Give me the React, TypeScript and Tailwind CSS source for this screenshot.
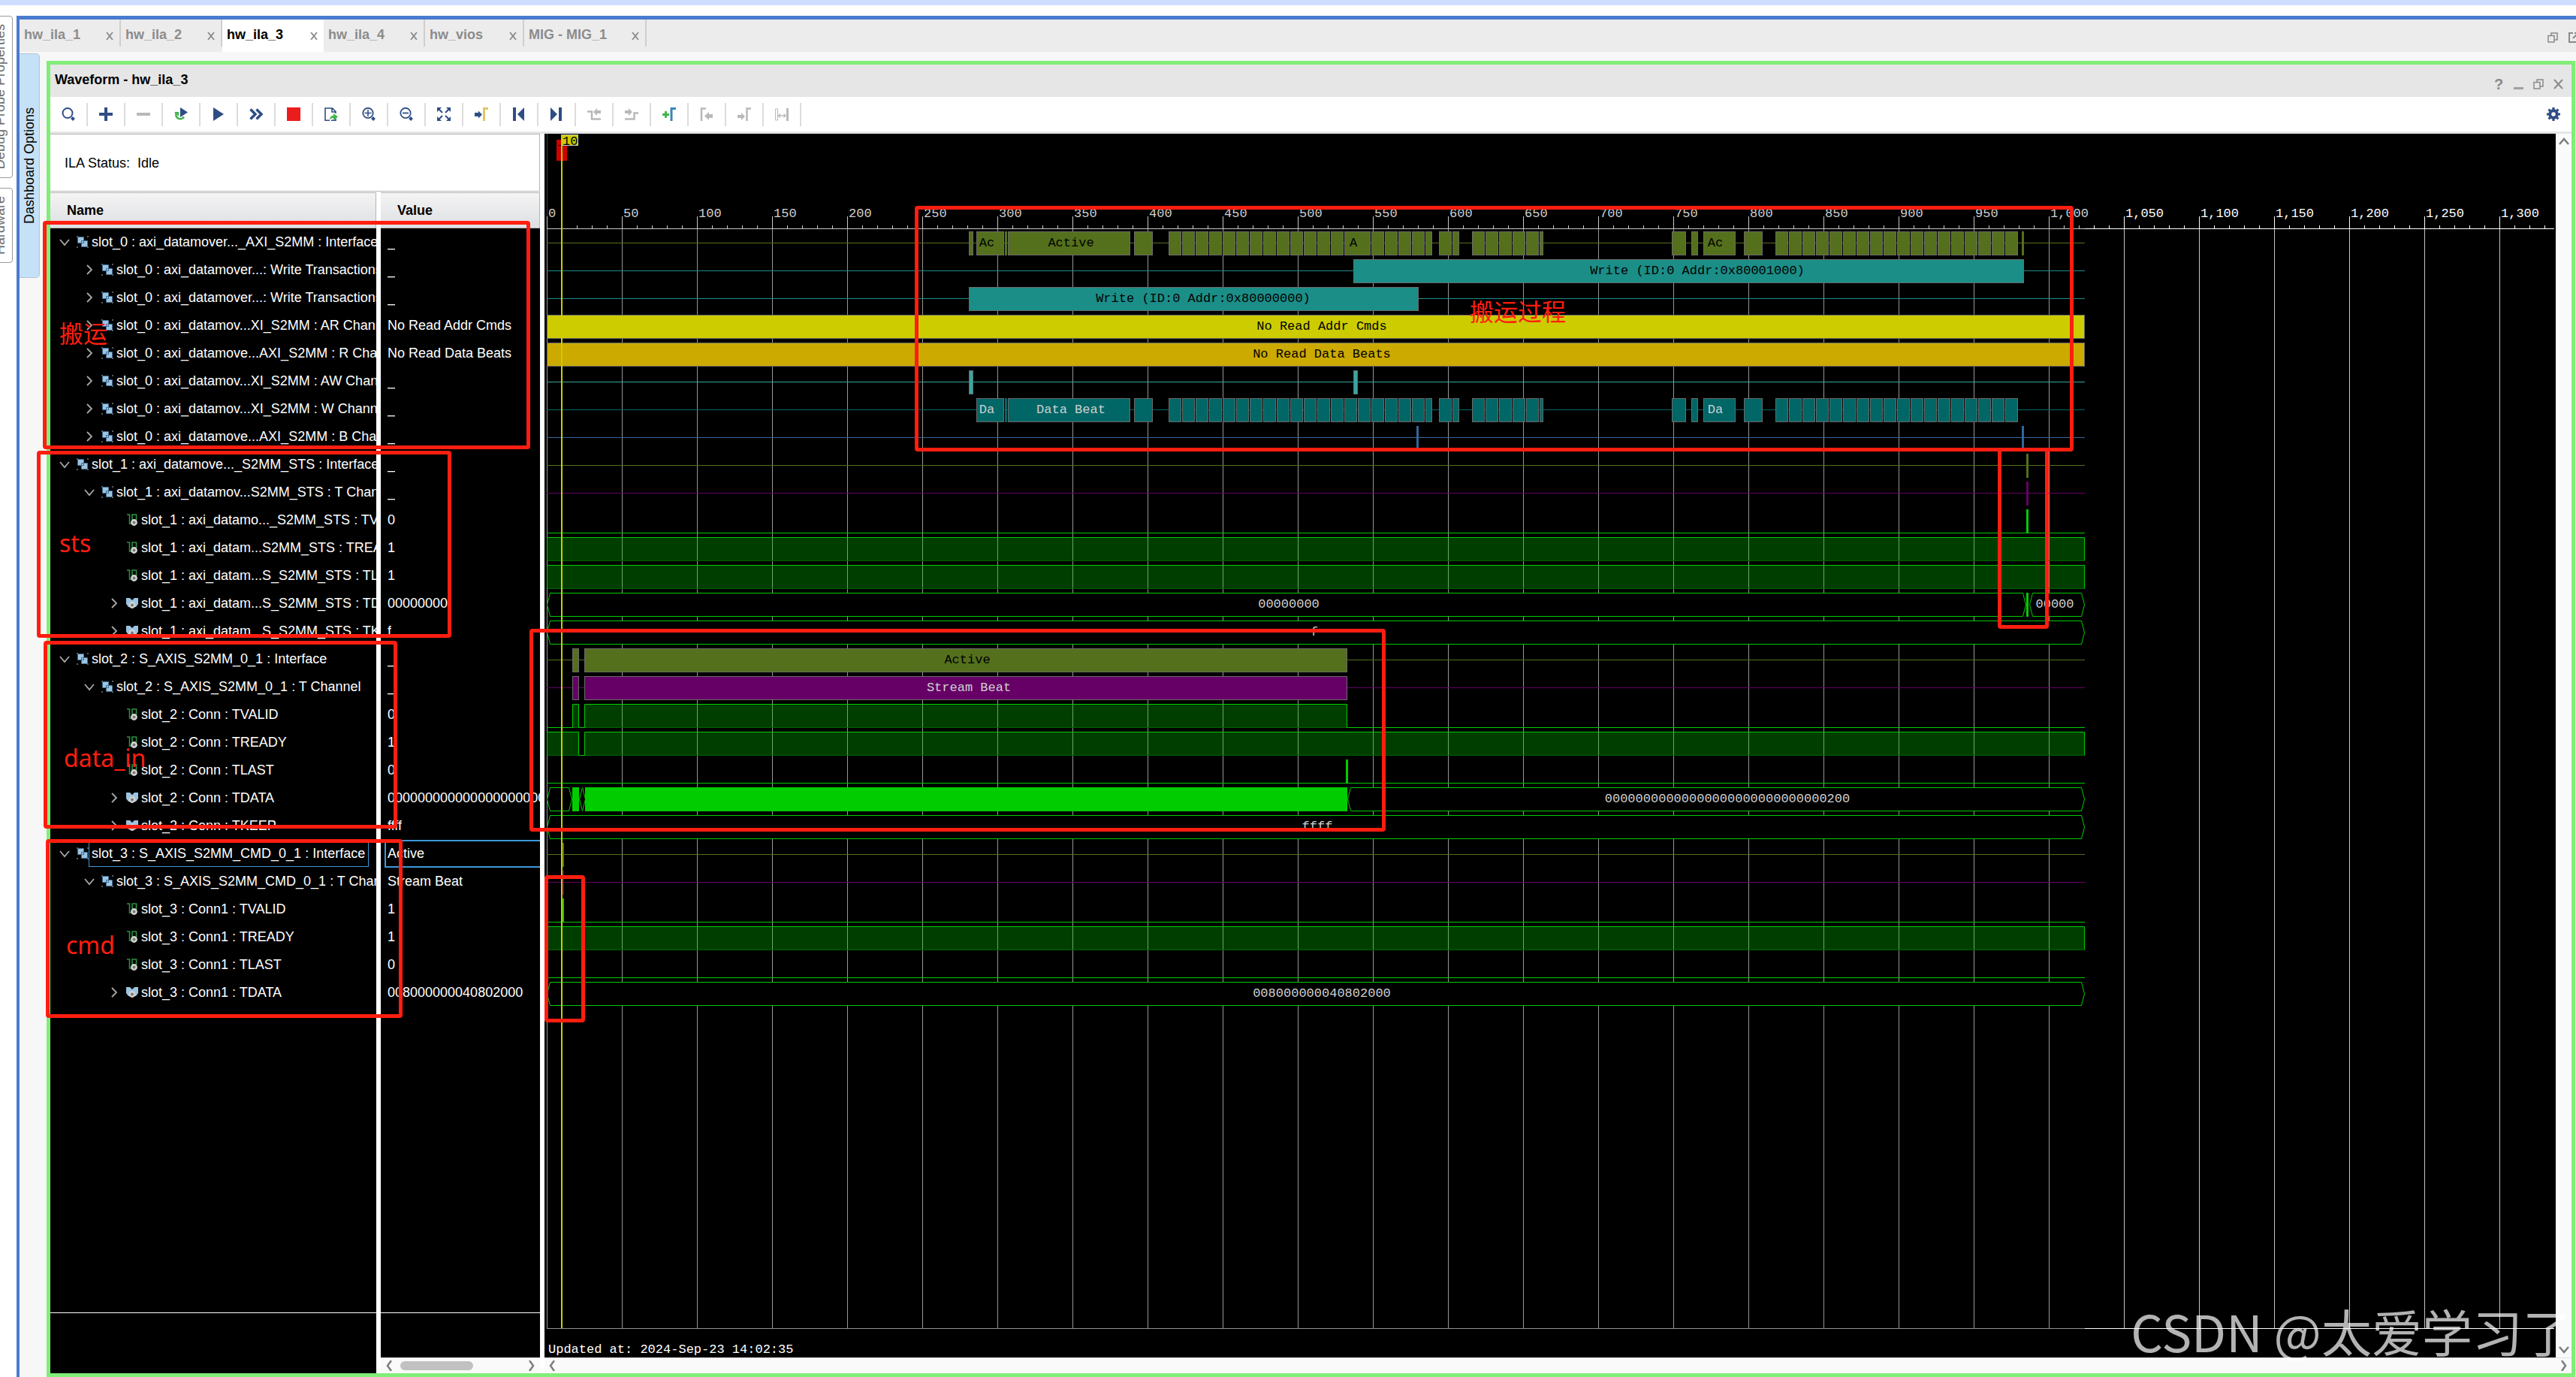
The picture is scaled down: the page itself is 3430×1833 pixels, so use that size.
import React from 'react';

/** Horizontal scale of the trace area */
const PX_PER_SAMPLE = 2;
const ORIGIN = 3;
const SAMPLES = 1024;
const ROW_H = 37;
const END = ORIGIN + SAMPLES * PX_PER_SAMPLE;

const OLIVE = '#54701c';
const TEAL = '#1b8e88';
const DARK_TEAL = '#006666';
const PURPLE = '#660066';
const GREEN = '#00cc00';

const MONO = "font-['Liberation_Mono',monospace] text-[17px]";

type Kind = 'group' | 'bit' | 'bus';

interface Signal {
  name: string;
  value: string;
  level: 0 | 1 | 2;
  kind: Kind;
  open?: boolean;
  selected?: boolean;
}

const SIGNALS: Signal[] = [
  { name: 'slot_0 : axi_datamover..._AXI_S2MM : Interface', value: '_', level: 0, kind: 'group', open: true },
  { name: 'slot_0 : axi_datamover...: Write Transactions', value: '_', level: 1, kind: 'group' },
  { name: 'slot_0 : axi_datamover...: Write Transactions', value: '_', level: 1, kind: 'group' },
  { name: 'slot_0 : axi_datamov...XI_S2MM : AR Channel', value: 'No Read Addr Cmds', level: 1, kind: 'group' },
  { name: 'slot_0 : axi_datamove...AXI_S2MM : R Channel', value: 'No Read Data Beats', level: 1, kind: 'group' },
  { name: 'slot_0 : axi_datamov...XI_S2MM : AW Channel', value: '_', level: 1, kind: 'group' },
  { name: 'slot_0 : axi_datamov...XI_S2MM : W Channel', value: '_', level: 1, kind: 'group' },
  { name: 'slot_0 : axi_datamove...AXI_S2MM : B Channel', value: '_', level: 1, kind: 'group' },
  { name: 'slot_1 : axi_datamove..._S2MM_STS : Interface', value: '_', level: 0, kind: 'group', open: true },
  { name: 'slot_1 : axi_datamov...S2MM_STS : T Channel', value: '_', level: 1, kind: 'group', open: true },
  { name: 'slot_1 : axi_datamo..._S2MM_STS : TVALID', value: '0', level: 2, kind: 'bit' },
  { name: 'slot_1 : axi_datam...S2MM_STS : TREADY', value: '1', level: 2, kind: 'bit' },
  { name: 'slot_1 : axi_datam...S_S2MM_STS : TLAST', value: '1', level: 2, kind: 'bit' },
  { name: 'slot_1 : axi_datam...S_S2MM_STS : TDATA', value: '00000000', level: 2, kind: 'bus' },
  { name: 'slot_1 : axi_datam...S_S2MM_STS : TKEEP', value: 'f', level: 2, kind: 'bus' },
  { name: 'slot_2 : S_AXIS_S2MM_0_1 : Interface', value: '_', level: 0, kind: 'group', open: true },
  { name: 'slot_2 : S_AXIS_S2MM_0_1 : T Channel', value: '_', level: 1, kind: 'group', open: true },
  { name: 'slot_2 : Conn : TVALID', value: '0', level: 2, kind: 'bit' },
  { name: 'slot_2 : Conn : TREADY', value: '1', level: 2, kind: 'bit' },
  { name: 'slot_2 : Conn : TLAST', value: '0', level: 2, kind: 'bit' },
  { name: 'slot_2 : Conn : TDATA', value: '00000000000000000000000000000200', level: 2, kind: 'bus' },
  { name: 'slot_2 : Conn : TKEEP', value: 'ffff', level: 2, kind: 'bus' },
  { name: 'slot_3 : S_AXIS_S2MM_CMD_0_1 : Interface', value: 'Active', level: 0, kind: 'group', open: true, selected: true },
  { name: 'slot_3 : S_AXIS_S2MM_CMD_0_1 : T Channel', value: 'Stream Beat', level: 1, kind: 'group', open: true },
  { name: 'slot_3 : Conn1 : TVALID', value: '1', level: 2, kind: 'bit' },
  { name: 'slot_3 : Conn1 : TREADY', value: '1', level: 2, kind: 'bit' },
  { name: 'slot_3 : Conn1 : TLAST', value: '0', level: 2, kind: 'bit' },
  { name: 'slot_3 : Conn1 : TDATA', value: '008000000040802000', level: 2, kind: 'bus' },
];

const TABS = [
  { label: 'hw_ila_1', width: 'w-[135px]' },
  { label: 'hw_ila_2', width: 'w-[135px]' },
  { label: 'hw_ila_3', width: 'w-[135px]', active: true },
  { label: 'hw_ila_4', width: 'w-[135px]' },
  { label: 'hw_vios', width: 'w-[132px]' },
  { label: 'MIG - MIG_1', width: 'w-[163px]' },
];

/* ---------- icons ---------- */

const NAVY = '#2f4d85';
const GREY = '#b9b9b9';

const TOOLS: { label: string; disabled?: boolean; icon: React.ReactNode }[] = [
  {
    label: 'Find',
    icon: (
      <g stroke={NAVY} fill="none">
        <circle cx="8" cy="7.5" r="6.5" strokeWidth="2" />
        <path d="M13.500 13.500l3 3" strokeWidth="4" />
      </g>
    ),
  },
  { label: 'Add', icon: <path d="M0 9h18M9 0v18" stroke={NAVY} strokeWidth="4" /> },
  { label: 'Remove', disabled: true, icon: <path d="M0 9h18" stroke={GREY} strokeWidth="4" /> },
  {
    label: 'Run trigger',
    icon: (
      <g>
        <path d="M3 6.5A5.5 5.5 0 1 0 13 12.5" fill="none" stroke="#3fb44a" strokeWidth="2.5" />
        <path d="M0 6h6v6z" fill="#3fb44a" />
        <path d="M8 0l10 6.5L8 13z" fill={NAVY} />
      </g>
    ),
  },
  { label: 'Run', icon: <path d="M2 0l14 9-14 9z" fill={NAVY} /> },
  {
    label: 'Run immediate',
    icon: <path d="M1.5 2.5L8 9l-6.500 6.500M9.500 2.500L16 9l-6.500 6.500" fill="none" stroke={NAVY} strokeWidth="3.5" />,
  },
  { label: 'Stop', icon: <path d="M0 0h18v18H0z" fill="#ec1c1c" /> },
  {
    label: 'Export',
    icon: (
      <g>
        <path d="M7 17.200H1V1h9.500L15 5.500V8M10 1v5h5M15 15v2.200H9" fill="none" stroke={NAVY} strokeWidth="1.600" />
        <path d="M12 8l6 4.500-6 4.500v-3c-2 0-4 .5-5 2.500 0-3.500 2-5.500 5-5.500z" fill="#3fb44a" />
      </g>
    ),
  },
  {
    label: 'Zoom in',
    icon: (
      <g stroke={NAVY} fill="none">
        <circle cx="8" cy="7.5" r="6.700" strokeWidth="1.800" />
        <path d="M3.500 7.500h9M8 3v9" strokeWidth="1.600" />
        <path d="M13.500 13.500l3 3" strokeWidth="4" />
      </g>
    ),
  },
  {
    label: 'Zoom out',
    icon: (
      <g stroke={NAVY} fill="none">
        <circle cx="8" cy="7.5" r="6.700" strokeWidth="1.800" />
        <path d="M4 7.500h8" strokeWidth="1.800" />
        <path d="M13.500 13.500l3 3" strokeWidth="4" />
      </g>
    ),
  },
  {
    label: 'Zoom fit',
    icon: (
      <g>
        <path d="M0 0h6L0 6zM18 0h-6l6 6zM0 18h6l-6-6zM18 18h-6l6-6z" fill={NAVY} />
        <path d="M2 2l5 5M16 2l-5 5M2 16l5-5M16 16l-5-5" stroke={NAVY} strokeWidth="2" />
      </g>
    ),
  },
  {
    label: 'Go to cursor',
    icon: (
      <g>
        <path d="M0 7h5V4.500L10 9.500l-5 5V12H0z" fill={NAVY} />
        <path d="M12.500 18V1.500H18" fill="none" stroke="#e3c562" strokeWidth="3" />
      </g>
    ),
  },
  { label: 'Previous marker', icon: <path d="M1 0h4v18H1zM16 0v18L7 9z" fill={NAVY} /> },
  { label: 'Next marker', icon: <path d="M12 0h4v18h-4zM1 0v18l9-9z" fill={NAVY} /> },
  {
    label: 'Previous transition',
    disabled: true,
    icon: (
      <g>
        <path d="M0 5.500h6V15.500h12" fill="none" stroke={GREY} strokeWidth="2.500" />
        <path d="M18 4h-5V1L8 6l5 5V8h5z" fill={GREY} />
      </g>
    ),
  },
  {
    label: 'Next transition',
    disabled: true,
    icon: (
      <g>
        <path d="M0 15.500h12.500V7.500H18" fill="none" stroke={GREY} strokeWidth="2.500" />
        <path d="M0 4h5V1l5 5-5 5V8H0z" fill={GREY} />
      </g>
    ),
  },
  {
    label: 'Add marker',
    icon: (
      <g>
        <path d="M0 9.500h9M4.500 5v9" stroke="#3fb44a" strokeWidth="2.800" />
        <path d="M12 18V1.500h6" fill="none" stroke="#3a86b8" strokeWidth="3" />
      </g>
    ),
  },
  {
    label: 'Previous edge',
    disabled: true,
    icon: (
      <g>
        <path d="M2 18V1.500h6" fill="none" stroke={GREY} strokeWidth="2.500" />
        <path d="M17 9h-5V6l-6 5.500 6 5.500v-3h5z" fill={GREY} />
      </g>
    ),
  },
  {
    label: 'Next edge',
    disabled: true,
    icon: (
      <g>
        <path d="M0 10h5V7l5 5-5 5v-3H0z" fill={GREY} />
        <path d="M12.500 18V1.500H18" fill="none" stroke={GREY} strokeWidth="2.500" />
      </g>
    ),
  },
  {
    label: 'Swap markers',
    disabled: true,
    icon: (
      <g>
        <path d="M.5 2h3v15h-3z" fill="none" stroke={GREY} />
        <path d="M15 1h3v17h-3z" fill={GREY} />
        <path d="M5 11h8M7 8.500L4.500 11 7 13.500M11.500 8.500L14 11l-2.500 2.500" fill="none" stroke={GREY} strokeWidth="1.300" />
      </g>
    ),
  },
];

function RestoreIcon() {
  return (
    <svg width="14" height="14" viewBox="0 0 14 14" fill="none" stroke="#8a8a8a" strokeWidth="1.500">
      <path d="M5 4V1h8v9H9" />
      <path d="M1 4.500h8V13H1z" />
    </svg>
  );
}

function GearIcon() {
  return (
    <svg width="18" height="18" viewBox="0 0 18 18" fill="none" stroke={NAVY}>
      <circle cx="9" cy="9" r="4.700" strokeWidth="4" />
      <path d="M9 0v3M9 15v3M0 9h3M15 9h3M2.600 2.600l2 2M13.400 13.400l2 2M2.600 15.400l2-2M13.400 4.600l2-2" strokeWidth="3.200" />
    </svg>
  );
}

function Arrow({ dir }: { dir: 'up' | 'down' | 'left' | 'right' }) {
  const d = {
    up: 'M1 11l6-7 6 7',
    down: 'M1 3l6 7 6-7',
    left: 'M10 0L5 7l5 7',
    right: 'M4 0l5 7-5 7',
  }[dir];
  return (
    <svg width="14" height="14" viewBox="0 0 14 14" fill="none" stroke="#7d7d7d" strokeWidth="2.500">
      <path d={d} />
    </svg>
  );
}

function SignalIcon({ kind }: { kind: Kind }) {
  return (
    <svg className="ml-2 shrink-0" width="16" height="16" viewBox="0 0 16 16">
      {kind === 'group' && (
        <g>
          <path d="M0 0h2v2H0zM14 0h2v2h-2zM0 14h2v2H0zM14 14h2v2h-2z" fill="#5a5a5a" />
          <path d="M1.500 1.500h8v8h-8zM6.500 6.500h8v8h-8z" fill="#9cc4e0" stroke="#3f6d92" />
        </g>
      )}
      {kind === 'bit' && (
        <g>
          <path d="M1 1h3.500v12H8V1h5.500v8" fill="none" stroke="#2f8f45" strokeWidth="1.600" />
          <circle cx="10.500" cy="11.500" r="3.200" fill="#777" stroke="#d4d4d4" strokeWidth="2.400" />
        </g>
      )}
      {kind === 'bus' && (
        <g>
          <path d="M0 1h5l3 3 3-3h5v8l-3 4H3L0 9z" fill="#9cc4e0" />
          <circle cx="8" cy="10.500" r="3.200" fill="#777" stroke="#d4d4d4" strokeWidth="2.400" />
        </g>
      )}
    </svg>
  );
}

/* ---------- signal list ---------- */

const INDENT = ['pl-[11px]', 'pl-[44px]', 'pl-[77px]'];

function SignalRow({ signal }: { signal: Signal }) {
  const { name, value, level, kind, open, selected } = signal;
  return (
    <tr className="h-[37px]">
      <td className="overflow-hidden p-0">
        <div className={`flex h-[37px] items-center pb-0.5 whitespace-nowrap ${INDENT[level]}`}>
          {kind === 'bit' ? (
            <span className="w-4 shrink-0" />
          ) : (
            <button aria-label={open ? 'Collapse' : 'Expand'} className="w-4 shrink-0">
              <svg width="16" height="16" viewBox="0 0 16 16" fill="none" stroke="#a8a8a8" strokeWidth="1.800">
                <path d={open ? 'M2 5l6 7 6-7' : 'M5 2l6 6-6 6'} />
              </svg>
            </button>
          )}
          <SignalIcon kind={kind} />
          <span
            className={`min-w-0 overflow-hidden ${
              selected ? 'border border-[#3f97d8] py-[6px] pr-1 pl-[3px]' : 'pl-1'
            }`}
          >
            {name}
          </span>
        </div>
      </td>
      <td className="overflow-hidden border-l-[6px] border-white p-0">
        <div
          className={`flex h-[37px] items-center whitespace-nowrap ${
            selected ? 'ml-[5px] border-y-2 border-l-2 border-[#3f97d8] pb-0.5 pl-[2px]' : 'pb-0.5 pl-[9px]'
          }`}
        >
          <span className="min-w-0 overflow-hidden">{value}</span>
        </div>
      </td>
    </tr>
  );
}

function HeaderCell({ label, className }: { label: string; className: string }) {
  return (
    <th className={`p-0 text-left font-bold ${className}`}>
      <div className="flex h-12 items-center border border-l-0 border-[#b4b4b4] bg-gradient-to-b from-[#f4f4f4] to-[#dedfe3] pl-[22px] text-black">
        {label}
      </div>
    </th>
  );
}

function SignalPanel() {
  return (
    <section className="flex w-[658px] shrink-0 flex-col border-r-[6px] border-white bg-white">
      <div className="mb-px flex h-[77px] items-center border border-l-0 border-[#b4b4b4] pl-[19px] whitespace-pre">
        ILA Status:  Idle
      </div>
      <table className="w-full table-fixed border-separate border-spacing-0 bg-black text-white">
        <colgroup>
          <col className="w-[434px]" />
          <col />
        </colgroup>
        <thead>
          <tr>
            <HeaderCell label="Name" className="" />
            <HeaderCell label="Value" className="border-l-[6px] border-white" />
          </tr>
        </thead>
        <tbody>
          {SIGNALS.map((s, i) => (
            <SignalRow key={i} signal={s} />
          ))}
        </tbody>
      </table>
      <div className="flex min-h-0 flex-1">
        <div className="flex w-[434px] flex-col bg-black">
          <div className="flex-1 border-b border-white" />
          <div className="h-[80px]" />
        </div>
        <div className="flex flex-1 flex-col border-l-[6px] border-white bg-black">
          <div className="flex-1 border-b border-white" />
          <div className="h-[59px]" />
          <div className="flex h-[21px] items-center gap-2 border-t border-[#e4e4e4] bg-[#fafafa] px-1">
            <Arrow dir="left" />
            <div className="h-3 w-[97px] rounded-full bg-[#c1c1c1]" />
            <div className="flex flex-1 justify-end">
              <Arrow dir="right" />
            </div>
          </div>
        </div>
      </div>
    </section>
  );
}

/* ---------- waveforms ---------- */

const sx = (sample: number) => ORIGIN + sample * PX_PER_SAMPLE;

interface Block {
  from: number;
  to: number;
  text?: string;
  textAt?: number;
}

/** Evenly spaced single beats, nine samples apart */
const beats = (from: number, count: number): Block[] =>
  Array.from({ length: count }, (_, i) => ({ from: from + i * 9, to: from + i * 9 + 8.5 }));

const TAIL: Block[] = [
  { from: 594, to: 602.5 },
  { from: 603, to: 607.5 },
  ...beats(616, 5),
  { from: 661, to: 663.5 },
  { from: 749, to: 758.5 },
  { from: 762, to: 766.5 },
];

const ACTIVE_0: Block[] = [
  { from: 281, to: 284 },
  { from: 286, to: 304.5, text: 'Ac', textAt: 293 },
  { from: 305, to: 306.5 },
  { from: 307, to: 388.5, text: 'Active', textAt: 349 },
  { from: 391, to: 403.5 },
  ...beats(414, 13),
  { from: 531, to: 548.5, text: 'A', textAt: 537 },
  ...beats(549, 4),
  { from: 585, to: 589.5 },
  ...TAIL,
  { from: 770, to: 791.5, text: 'Ac', textAt: 778 },
  { from: 797, to: 809.5 },
  ...beats(818, 18),
  { from: 982, to: 983.5 },
];

const BEATS_0: Block[] = [
  { from: 286, to: 304.5, text: 'Da', textAt: 293 },
  { from: 305, to: 306.5 },
  { from: 307, to: 388.5, text: 'Data Beat', textAt: 349 },
  { from: 391, to: 403.5 },
  ...beats(414, 19),
  { from: 585, to: 589.5 },
  ...TAIL,
  { from: 770, to: 791.5, text: 'Da', textAt: 778 },
  { from: 797, to: 809.5 },
  ...beats(818, 18),
];

function WaveText({ at, color = '#d0d0d0', children }: { at: number; color?: string; children: string }) {
  return (
    <text x={sx(at)} y="23" textAnchor="middle" fill={color}>
      {children}
    </text>
  );
}

/** Transaction row: an idle line with filled blocks on it */
function Blocks({ color, text = '#000', blocks }: { color: string; text?: string; blocks: Block[] }) {
  return (
    <>
      <path d={`M${ORIGIN} 18.500H${END}`} stroke={color} />
      {blocks.map((b) => (
        <g key={b.from}>
          <rect
            x={sx(b.from) + 0.5}
            y="3.500"
            width={(b.to - b.from) * PX_PER_SAMPLE - 1}
            height="31"
            fill={color}
            stroke={b.to - b.from < 2 ? color : '#6a6a6a'}
          />
          {b.text && (
            <WaveText at={b.textAt ?? (b.from + b.to) / 2} color={text}>
              {b.text}
            </WaveText>
          )}
        </g>
      ))}
    </>
  );
}

/** One-bit trace; `high` lists the ranges where the signal is 1 */
function Bit({ high }: { high: [number, number][] }) {
  let d = `M${ORIGIN} 34.5`;
  high.forEach(([a, b]) => {
    d += `H${sx(a) + 0.5}V3.5H${sx(b) - 0.5}V34.5`;
  });
  if (!high.length || high[high.length - 1][1] < SAMPLES) d += `H${END}`;
  return (
    <>
      <path d={d} fill={GREEN} fillOpacity="0.3" />
      <path d={d} fill="none" stroke={GREEN} />
      {high.map(([a, b]) => (
        <path key={a} d={`M${sx(a) + 1} 34.500H${sx(b) - 1}`} stroke="#006400" />
      ))}
    </>
  );
}

function Tick({ at, color = GREEN }: { at: number; color?: string }) {
  return <rect x={sx(at)} y="3" width="3" height="32" fill={color} />;
}

function Bus({ from = 0, to = SAMPLES, text, textAt }: { from?: number; to?: number; text?: string; textAt?: number }) {
  const a = sx(from) + 0.5;
  const b = sx(to) - 0.5;
  return (
    <>
      <path d={`M${a} 19L${a + 4} 3.500H${b - 4}L${b} 19L${b - 4} 34.500H${a + 4}Z`} fill="#000" stroke={GREEN} />
      {text && <WaveText at={textAt ?? (from + to) / 2}>{text}</WaveText>}
    </>
  );
}

const TRACES: React.ReactNode[] = [
  <Blocks color={OLIVE} blocks={ACTIVE_0} />,
  <Blocks color={TEAL} blocks={[{ from: 537, to: 983.5, text: 'Write (ID:0 Addr:0x80001000)', textAt: 766 }]} />,
  <Blocks color={TEAL} blocks={[{ from: 281, to: 580.5, text: 'Write (ID:0 Addr:0x80000000)', textAt: 437 }]} />,
  <Blocks color="#cccc00" blocks={[{ from: 0, to: 1024, text: 'No Read Addr Cmds', textAt: 516 }]} />,
  <Blocks color="#ccaa00" blocks={[{ from: 0, to: 1024, text: 'No Read Data Beats', textAt: 516 }]} />,
  <Blocks color="#3aa6a0" blocks={[{ from: 281, to: 284 }, { from: 537, to: 540 }]} />,
  <Blocks color={DARK_TEAL} text="#d0d0d0" blocks={BEATS_0} />,
  <Blocks color="#336699" blocks={[{ from: 579, to: 580.5 }, { from: 982, to: 983.5 }]} />,
  <Blocks color={OLIVE} blocks={[{ from: 985, to: 986.5 }]} />,
  <Blocks color={PURPLE} blocks={[{ from: 985, to: 986.5 }]} />,
  <>
    <Bit high={[]} />
    <Tick at={985} />
  </>,
  <Bit high={[[0, 1024]]} />,
  <Bit high={[[0, 1024]]} />,
  <>
    <Bus to={985} text="00000000" textAt={494} />
    <Bus from={987} text="00000" textAt={1004} />
    <Tick at={985} />
  </>,
  <Bus text="f" textAt={511} />,
  <Blocks color={OLIVE} blocks={[{ from: 17, to: 21.5 }, { from: 25, to: 533, text: 'Active', textAt: 280 }]} />,
  <Blocks color={PURPLE} text="#d0d0d0" blocks={[{ from: 17, to: 21.5 }, { from: 25, to: 533, text: 'Stream Beat', textAt: 281 }]} />,
  <Bit high={[[17, 21.5], [25, 533]]} />,
  <Bit high={[[0, 21.5], [25, 1024]]} />,
  <>
    <Bit high={[]} />
    <Tick at={532} />
  </>,
  <>
    <Bus to={17} />
    <Bus from={21.5} to={26} />
    <Bus from={533} text="00000000000000000000000000000200" textAt={786} />
    <path d={`M${sx(17)} 3H${sx(21.5)}V35H${sx(17)}ZM${sx(25.5)} 3H${sx(533)}V35H${sx(25.5)}Z`} fill={GREEN} />
  </>,
  <Bus text="ffff" textAt={513} />,
  <Blocks color={OLIVE} blocks={[{ from: 10, to: 11.5 }]} />,
  <Blocks color={PURPLE} blocks={[{ from: 10, to: 11.5 }]} />,
  <>
    <Bit high={[]} />
    <Tick at={10} />
  </>,
  <Bit high={[[0, 1024]]} />,
  <Bit high={[]} />,
  <Bus text="008000000040802000" textAt={516} />,
];

const MAJORS = Array.from({ length: 27 }, (_, i) => i * 50);
const MINORS = Array.from({ length: 134 }, (_, i) => i * 10).filter((t) => t % 50 !== 0);

function Ruler() {
  return (
    <svg className={`block h-[127px] w-full shrink-0 ${MONO}`}>
      <path d={`M${ORIGIN + 0.5} 0V110`} stroke="#3c3c3c" />
      {MAJORS.map((t) => (
        <g key={t}>
          <path d={`M${sx(t) + 0.5} 110V127`} stroke={t > SAMPLES ? '#fff' : '#c8c8c8'} />
          <text x={sx(t) + 2} y="111" fill={t > SAMPLES ? '#fff' : '#d0d0d0'}>
            {t.toLocaleString('en-US')}
          </text>
        </g>
      ))}
      {MINORS.map((t) => (
        <path key={t} d={`M${sx(t) + 0.5} 122V127`} stroke={t > SAMPLES ? '#fff' : '#c8c8c8'} />
      ))}
      <path d={`M${ORIGIN} 126.500H${END}`} stroke="#c8c8c8" />
      <path d={`M${END} 126.500H2676`} stroke="#fff" />
      {/* trigger marker, then the cursor flag on top of it */}
      <rect x="16" y="8" width="14" height="28" fill="#d00000" />
      <text x="18" y="26" fill="#000">
        T
      </text>
      <rect x="22.500" y="1.500" width="22" height="14" fill="#cccc00" stroke="#c8c8c8" />
      <text x="24" y="15" fill="#000">
        10
      </text>
      <path d="M23 1V127" stroke="#cccc00" strokeWidth="2" />
    </svg>
  );
}

function Traces() {
  return (
    <svg className={`block min-h-0 w-full flex-1 ${MONO}`}>
      {MAJORS.map((t) => (
        <line key={t} x1={sx(t) + 0.5} x2={sx(t) + 0.5} y1="0" y2="100%" stroke={t > SAMPLES ? '#c4c4c4' : '#969696'} />
      ))}
      {TRACES.map((trace, i) => (
        <g key={i} transform={`translate(0 ${i * ROW_H})`}>
          {trace}
        </g>
      ))}
      <line x1="23" x2="23" y1="0" y2="100%" stroke="#cccc00" strokeWidth="2" />
      <line x1={ORIGIN} x2={END} y1="100%" y2="100%" stroke="#909090" strokeWidth="2" />
      <line x1={END} x2="2676" y1="100%" y2="100%" stroke="#fff" strokeWidth="2" />
    </svg>
  );
}

function WavePanel() {
  return (
    <section className="flex min-w-0 flex-1 flex-col">
      <div className="flex min-h-0 flex-1">
        <div className="flex min-w-0 flex-1 flex-col bg-black">
          <Ruler />
          <Traces />
          <div className={`h-[38px] shrink-0 pt-4 pl-[5px] leading-6 text-white ${MONO}`}>
            Updated at: 2024-Sep-23 14:02:35
          </div>
        </div>
        <div className="flex w-[21px] flex-col items-center justify-between bg-[#fafafa] py-[3px]">
          <Arrow dir="up" />
          <Arrow dir="down" />
        </div>
      </div>
      <div className="flex h-[21px] items-center justify-between border-t border-[#e4e4e4] bg-[#fafafa] px-[3px]">
        <Arrow dir="left" />
        <Arrow dir="right" />
      </div>
    </section>
  );
}

/* ---------- annotations drawn over the window ---------- */

const FRAMES = [
  'left-[57px] top-[294px] w-[649px] h-[304px]',
  'left-[49px] top-[600px] w-[552px] h-[249px]',
  'left-[58px] top-[853px] w-[471px] h-[250px]',
  'left-[61px] top-[1117px] w-[475px] h-[238px]',
  'left-[1218px] top-[274px] w-[1543px] h-[327px]',
  'left-[2660px] top-[596px] w-[68px] h-[241px]',
  'left-[705px] top-[837px] w-[1140px] h-[270px]',
  'left-[725px] top-[1165px] w-[54px] h-[196px]',
];

const NOTES = [
  { text: '搬运', place: 'left-[79px] top-[428px]' },
  { text: 'sts', place: 'left-[79px] top-[707px]' },
  { text: 'data_in', place: 'left-[85px] top-[993px]' },
  { text: 'cmd', place: 'left-[88px] top-[1242px]' },
  { text: '搬运过程', place: 'left-[1957px] top-[399px]' },
];

function Annotations() {
  return (
    <div className="pointer-events-none absolute inset-0 font-['Noto_Sans','Noto_Sans_CJK_SC',sans-serif]">
      {FRAMES.map((f) => (
        <div key={f} className={`absolute rounded-[4px] border-[5px] border-[#ff1e10] ${f}`} />
      ))}
      {NOTES.map((n) => (
        <p key={n.text} className={`absolute text-[32px] leading-8 whitespace-nowrap text-[#ff1e10] ${n.place}`}>
          {n.text}
        </p>
      ))}
      <p className="absolute right-1 bottom-[26px] font-['Noto_Sans_CJK_SC',sans-serif] text-[67px] leading-[72px] whitespace-nowrap text-white/70">
        CSDN @太爱学习了
      </p>
    </div>
  );
}

/* ---------- window chrome ---------- */

function SideTab({ label, className }: { label: string; className: string }) {
  return (
    <button
      className={`-ml-[17px] flex w-[34px] shrink-0 items-center justify-center rounded-[4px] border border-[#9a9a9a] bg-white text-[#6b6b6b] ${className}`}
    >
      <span className="rotate-180 whitespace-nowrap [writing-mode:vertical-rl]">{label}</span>
    </button>
  );
}

function TabBar() {
  return (
    <nav className="flex h-[43px] shrink-0 bg-[#ececec] font-bold">
      {TABS.map((t) => (
        <div
          key={t.label}
          className={`flex shrink-0 items-center justify-between pr-2 pl-[6px] ${t.width} ${
            t.active ? 'bg-white pb-[3px] text-black' : 'mb-[7px] border-r-2 border-[#cfcfcf] pt-1 text-[#8c8c8c]'
          }`}
        >
          <button className="whitespace-nowrap">{t.label}</button>
          <button aria-label={`Close ${t.label}`} className="pt-1">
            <svg className="block" width="10" height="10" viewBox="0 0 10 10" stroke="#8a8a8a" strokeWidth="1.800">
              <path d="M1 0l8 10M9 0L1 10" />
            </svg>
          </button>
        </div>
      ))}
      <div className="flex flex-1 items-center justify-end gap-[14px] pt-1">
        <button aria-label="Restore">
          <RestoreIcon />
        </button>
        <button aria-label="Float" className="-mr-1">
          <svg width="14" height="14" viewBox="0 0 14 14" fill="none" stroke="#8a8a8a" strokeWidth="2">
            <path d="M6 1H1v12h12V8M6 8l6-6M8 1h5v5" />
          </svg>
        </button>
      </div>
    </nav>
  );
}

export default function App() {
  return (
    <div className="relative flex h-screen flex-col overflow-hidden bg-white font-['Liberation_Sans',Arial,sans-serif] text-[18px] leading-[22px] text-black">
      <div className="h-[7px] shrink-0 bg-[#ccddff]" />
      <div className="flex min-h-0 flex-1 pt-[14px]">
        <aside className="flex w-[22px] shrink-0 flex-col gap-[13px] overflow-hidden">
          <SideTab label="Debug Probe Properties" className="h-[216px]" />
          <SideTab label="Hardware" className="h-[100px]" />
        </aside>

        <main className="flex min-w-0 flex-1 flex-col border-t-[5px] border-l-4 border-[#4a7bd0] bg-[#f7f7f7]">
          <TabBar />
          <div className="flex min-h-0 flex-1 pr-px">
            <button className="mt-0.5 mr-[9px] flex h-[299px] w-[27px] shrink-0 items-center justify-center rounded-r-[5px] border border-l-0 border-[#b4c4d2] bg-[#c5e1f7]">
              <span className="rotate-180 whitespace-nowrap [writing-mode:vertical-rl]">Dashboard Options</span>
            </button>

            <div className="mt-3 flex min-w-0 flex-1 flex-col border-[5px] border-[#80ee78] bg-white">
              <header className="flex h-[43px] shrink-0 items-center justify-between bg-[#e6e6e6] pr-[11px] pb-1 pl-[6px]">
                <h1 className="font-bold">Waveform - hw_ila_3</h1>
                <div className="flex items-center gap-[13px] pt-3 font-bold text-[#8a8a8a]">
                  <button aria-label="Help" className="w-[14px] text-[20px]">
                    ?
                  </button>
                  <button aria-label="Minimize" className="flex h-[14px] w-[13px] items-end">
                    <span className="h-[3px] w-full bg-[#a0a0a0]" />
                  </button>
                  <button aria-label="Restore">
                    <RestoreIcon />
                  </button>
                  <button aria-label="Close">
                    <svg width="13" height="14" viewBox="0 0 13 14" stroke="#8a8a8a" strokeWidth="2">
                      <path d="M1 1l11 12M12 1L1 13" />
                    </svg>
                  </button>
                </div>
              </header>

              <div className="flex h-[49px] shrink-0 items-center border-b-[3px] border-[#e6e6e6]" role="toolbar">
                {TOOLS.map((t) => (
                  <button
                    key={t.label}
                    aria-label={t.label}
                    disabled={t.disabled}
                    className="flex h-[31px] w-[50px] shrink-0 items-center justify-center border-r-2 border-[#dcdcdc]"
                  >
                    <svg width="18" height="18" viewBox="0 0 18 18">
                      {t.icon}
                    </svg>
                  </button>
                ))}
                <div className="flex flex-1 justify-end pr-[15px]">
                  <button aria-label="Settings">
                    <GearIcon />
                  </button>
                </div>
              </div>

              <div className="flex min-h-0 flex-1">
                <SignalPanel />
                <WavePanel />
              </div>
            </div>
          </div>
        </main>
      </div>
      <Annotations />
    </div>
  );
}
